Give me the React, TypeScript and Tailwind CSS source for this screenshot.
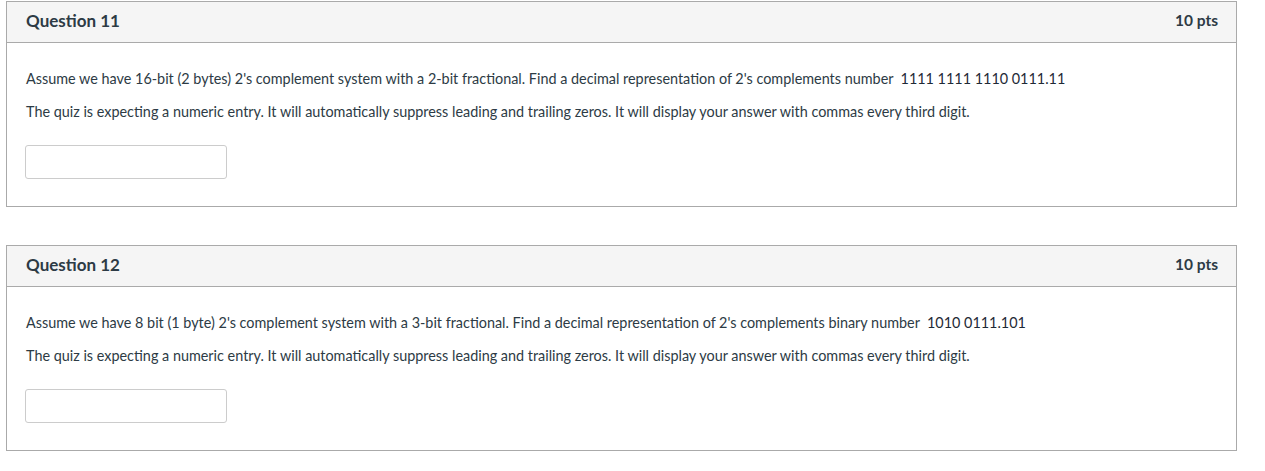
import React from 'react'

type Q = {
  title: string
  points: string
  prompt: string
  number: string
}

const questions: Q[] = [
  {
    title: 'Question 11',
    points: '10 pts',
    prompt:
      "Assume we have 16-bit (2 bytes) 2's complement system with a 2-bit fractional. Find a decimal representation of 2's complements number",
    number: '1111 1111 1110 0111.11',
  },
  {
    title: 'Question 12',
    points: '10 pts',
    prompt:
      "Assume we have 8 bit (1 byte) 2's complement system with a 3-bit fractional. Find a decimal representation of 2's complements binary number",
    number: '1010 0111.101',
  },
]

const QuestionCard: React.FC<{ q: Q }> = ({ q }) => (
  <div className="border border-[#aaaaaa] bg-white">
    {/* Cabecera */}
    <div className="flex items-center justify-between h-[41px] bg-[#f5f5f5] border-b border-[#aaaaaa] pl-[19px] pr-[18px] pb-[3px]">
      <span className="text-[17px] font-bold text-[#2d3b45]">{q.title}</span>
      <span className="text-[15.5px] font-bold text-[#2d3b45]">{q.points}</span>
    </div>

    {/* Cuerpo */}
    <div className="pl-[19px] pr-5 pt-[26px] pb-[27px] text-[14.4px] text-[#2d3b45]">
      <p className="leading-[20px]">
        {q.prompt}&nbsp; <span className="text-[#1f2a36]">{q.number}</span>
      </p>
      <p className="leading-[20px] mt-[13px]">
        The quiz is expecting a numeric entry. It will automatically suppress leading and trailing zeros. It will display your answer with commas every third digit.
      </p>
      <input
        type="text"
        className="block mt-[23px] -ml-px w-[202px] h-[34px] border border-[#cccccc] rounded-[3px] bg-white"
      />
    </div>
  </div>
)

export default function App() {
  return (
    <div
      className="w-[1265px] h-[471px] bg-white pt-px pl-[6px] overflow-hidden"
      style={{ fontFamily: 'Lato, "Open Sans", sans-serif' }}
    >
      <div className="w-[1231px] flex flex-col gap-[38px]">
        {questions.map(q => (
          <QuestionCard key={q.title} q={q} />
        ))}
      </div>
    </div>
  )
}
